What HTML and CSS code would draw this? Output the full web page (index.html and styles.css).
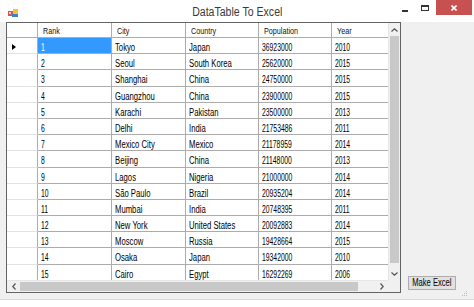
FILE: index.html
```html
<!DOCTYPE html>
<html lang="en">
<head>
    <meta charset="UTF-8">
    <title>DataTable To Excel</title>
    <link rel="stylesheet" href="styles.css">
</head>
<body>
    <div class="window">
        <div class="titlebar">
            <div class="app-icon">
                <svg width="11" height="9" viewBox="0 0 11 9">
                    <rect x="5" y="0" width="5" height="5" fill="#f2c230"/>
                    <rect x="0" y="2" width="5" height="5" fill="#d9534f"/>
                    <rect x="4" y="5" width="6" height="3" fill="#3f7fd0"/>
                    <rect x="1" y="3" width="2" height="2" fill="#f5d0c8"/>
                </svg>
            </div>
            <div class="title"><span>DataTable To Excel</span></div>
            <div class="controls">
                <div class="btn-min"></div>
                <div class="btn-max"></div>
                <div class="btn-close">
                    <svg width="6" height="6" viewBox="0 0 6 6">
                        <path d="M0.5 0.5 L5.5 5.5 M5.5 0.5 L0.5 5.5" stroke="#fff" stroke-width="1.6"/>
                    </svg>
                </div>
            </div>
        </div>

        <div class="client">
            <div class="grid-box">
                <div class="view">
                    <div class="row header-row">
                        <div class="cell corner-head"></div>
                        <div class="cell"><span class="t">Rank</span></div>
                        <div class="cell"><span class="t">City</span></div>
                        <div class="cell"><span class="t">Country</span></div>
                        <div class="cell"><span class="t">Population</span></div>
                        <div class="cell"><span class="t">Year</span></div>
                    </div>
                    <div id="rows"></div>
                </div>

                <div class="vscroll">
                    <div class="arrow">
                        <svg width="7" height="4" viewBox="0 0 7 4"><path d="M0.5 3.5 L3.5 0.8 L6.5 3.5" fill="none" stroke="#555" stroke-width="1.2"/></svg>
                    </div>
                    <div class="v-thumb"></div>
                    <div class="track"></div>
                    <div class="arrow">
                        <svg width="7" height="4" viewBox="0 0 7 4"><path d="M0.5 0.5 L3.5 3.2 L6.5 0.5" fill="none" stroke="#555" stroke-width="1.2"/></svg>
                    </div>
                </div>

                <div class="hscroll">
                    <div class="arrow">
                        <svg width="4" height="7" viewBox="0 0 4 7"><path d="M3.5 0.5 L0.8 3.5 L3.5 6.5" fill="none" stroke="#555" stroke-width="1.2"/></svg>
                    </div>
                    <div class="h-thumb"></div>
                    <div class="track"></div>
                    <div class="arrow">
                        <svg width="4" height="7" viewBox="0 0 4 7"><path d="M0.5 0.5 L3.2 3.5 L0.5 6.5" fill="none" stroke="#555" stroke-width="1.2"/></svg>
                    </div>
                </div>

                <div class="scroll-corner"></div>
            </div>

            <div class="side">
                <button class="make-btn"><span>Make Excel</span></button>
            </div>

            <svg class="grip" width="6" height="6" viewBox="0 0 6 6">
                <rect x="4" y="0" width="1" height="1" fill="#bbb"/>
                <rect x="2" y="2" width="1" height="1" fill="#bbb"/>
                <rect x="4" y="2" width="1" height="1" fill="#bbb"/>
                <rect x="0" y="4" width="1" height="1" fill="#bbb"/>
                <rect x="2" y="4" width="1" height="1" fill="#bbb"/>
                <rect x="4" y="4" width="1" height="1" fill="#bbb"/>
            </svg>
        </div>
    </div>

    <script>
        const cities = [
            [1, "Tokyo", "Japan", 36923000, 2010],
            [2, "Seoul", "South Korea", 25620000, 2015],
            [3, "Shanghai", "China", 24750000, 2015],
            [4, "Guangzhou", "China", 23900000, 2015],
            [5, "Karachi", "Pakistan", 23500000, 2013],
            [6, "Delhi", "India", 21753486, 2011],
            [7, "Mexico City", "Mexico", 21178959, 2014],
            [8, "Beijing", "China", 21148000, 2013],
            [9, "Lagos", "Nigeria", 21000000, 2014],
            [10, "São Paulo", "Brazil", 20935204, 2014],
            [11, "Mumbai", "India", 20748395, 2011],
            [12, "New York", "United States", 20092883, 2014],
            [13, "Moscow", "Russia", 19428664, 2015],
            [14, "Osaka", "Japan", 19342000, 2010],
            [15, "Cairo", "Egypt", 16292269, 2006]
        ];

        const rowsContainer = document.getElementById("rows");

        cities.forEach((city, index) => {
            const row = document.createElement("div");
            row.className = "row";
            const current = index === 0;

            row.innerHTML = `
                <div class="cell row-head">${current ? '<i class="pointer"></i>' : ''}</div>
                <div class="cell${current ? ' selected' : ''}"><span class="t num">${city[0]}</span></div>
                <div class="cell"><span class="t">${city[1]}</span></div>
                <div class="cell"><span class="t">${city[2]}</span></div>
                <div class="cell"><span class="t num">${city[3]}</span></div>
                <div class="cell"><span class="t num">${city[4]}</span></div>
            `;

            rowsContainer.appendChild(row);
        });
    </script>
</body>
</html>
```

FILE: styles.css
```css
* {
    margin: 0;
    padding: 0;
    box-sizing: border-box;
}

body {
    font-family: 'Liberation Sans', Arial, sans-serif;
    background-color: #ffffff;
    color: #000;
    width: 474px;
    height: 307px;
    overflow: hidden;
}

.window {
    width: 474px;
}

/* title bar */
.titlebar {
    height: 22px;
    display: grid;
    grid-template-columns: 1fr auto 1fr;
    background-color: #ffffff;
}

.app-icon {
    padding: 9px 0 0 8px;
}

.app-icon svg {
    display: block;
}

.title {
    padding-top: 3px;
    line-height: 19px;
    font-size: 12px;
    color: #3a3a3a;
    white-space: nowrap;
}

.title span {
    display: inline-block;
    transform: scaleX(0.88);
}

.controls {
    display: flex;
    justify-content: flex-end;
    align-items: flex-start;
    padding-right: 2px;
}

.btn-min {
    width: 6px;
    height: 2px;
    margin: 10px 13px 0 0;
    background-color: #333;
}

.btn-max {
    width: 8px;
    height: 6px;
    margin: 5px 7px 0 0;
    border: 1px solid #333;
    border-top-width: 2px;
}

.btn-close {
    width: 36px;
    height: 15px;
    background-color: #c75050;
    display: flex;
    align-items: center;
    justify-content: center;
}

/* form area */
.client {
    position: relative;
    height: 278px;
    display: flex;
    padding: 0 0 7px 6px;
    background-color: #f0f0f0;
    border-bottom: 1px solid #dadada;
}

.grid-box {
    width: 395px;
    height: 271px;
    border: 1px solid #646464;
    background-color: #ffffff;
    display: grid;
    grid-template-columns: 381px 12px;
    grid-template-rows: 257px 12px;
}

.view {
    overflow: hidden;
    background-color: #ffffff;
}

.row {
    display: grid;
    grid-template-columns: 31px 74px 74px 73px 73px 74px;
    height: 16.2px;
}

.cell {
    border-right: 1px solid #acacac;
    border-bottom: 1px solid #acacac;
    padding: 3px 0 0 3px;
    font-size: 10px;
    line-height: 13px;
    white-space: nowrap;
    overflow: hidden;
}

.t {
    display: inline-block;
    transform: scaleX(0.77);
    transform-origin: left center;
}

.t.num {
    transform: scaleX(0.68);
}

.header-row {
    height: 15px;
}

.header-row .cell {
    font-size: 9px;
    line-height: 11px;
    padding: 3px 0 0 5px;
    color: #111;
}

.header-row .t {
    transform: scaleX(0.8);
}

.row-head {
    border-bottom-color: #e2e2e2;
    border-right-color: #acacac;
    display: flex;
    align-items: center;
    padding: 2px 0 0 5px;
}

.corner-head {
    border-bottom-color: #acacac;
}

.pointer {
    width: 0;
    height: 0;
    border-left: 4px solid #000;
    border-top: 3px solid transparent;
    border-bottom: 3px solid transparent;
}

.selected {
    background-color: #3399ff;
    color: #ffffff;
}

/* scroll bars */
.vscroll {
    display: flex;
    flex-direction: column;
    background-color: #f0f0f0;
    border-left: 1px solid #e6e6e6;
}

.vscroll .arrow {
    height: 13px;
    display: flex;
    align-items: center;
    justify-content: center;
}

.v-thumb {
    height: 227px;
    margin: 0 1px;
    background-color: #c8c8c8;
}

.track {
    flex: 1;
}

.hscroll {
    display: flex;
    background-color: #f0f0f0;
    border-top: 1px solid #e6e6e6;
}

.hscroll .arrow {
    width: 13px;
    display: flex;
    align-items: center;
    justify-content: center;
}

.h-thumb {
    width: 338px;
    margin: 1px 0;
    background-color: #c8c8c8;
}

.scroll-corner {
    background-color: #f0f0f0;
}

.side {
    flex: 1;
    display: flex;
    align-items: flex-end;
    padding: 0 0 2px 7px;
}

.make-btn {
    width: 48px;
    height: 14px;
    background-color: #e1e1e1;
    border: 1px solid #adadad;
    font-family: 'Liberation Sans', Arial, sans-serif;
    font-size: 10px;
    line-height: 12px;
    color: #000;
    display: flex;
    justify-content: center;
    white-space: nowrap;
    overflow: hidden;
}

.make-btn span {
    flex-shrink: 0;
    transform: scaleX(0.76);
}

.grip {
    position: absolute;
    right: 6px;
    bottom: 2px;
}
```
